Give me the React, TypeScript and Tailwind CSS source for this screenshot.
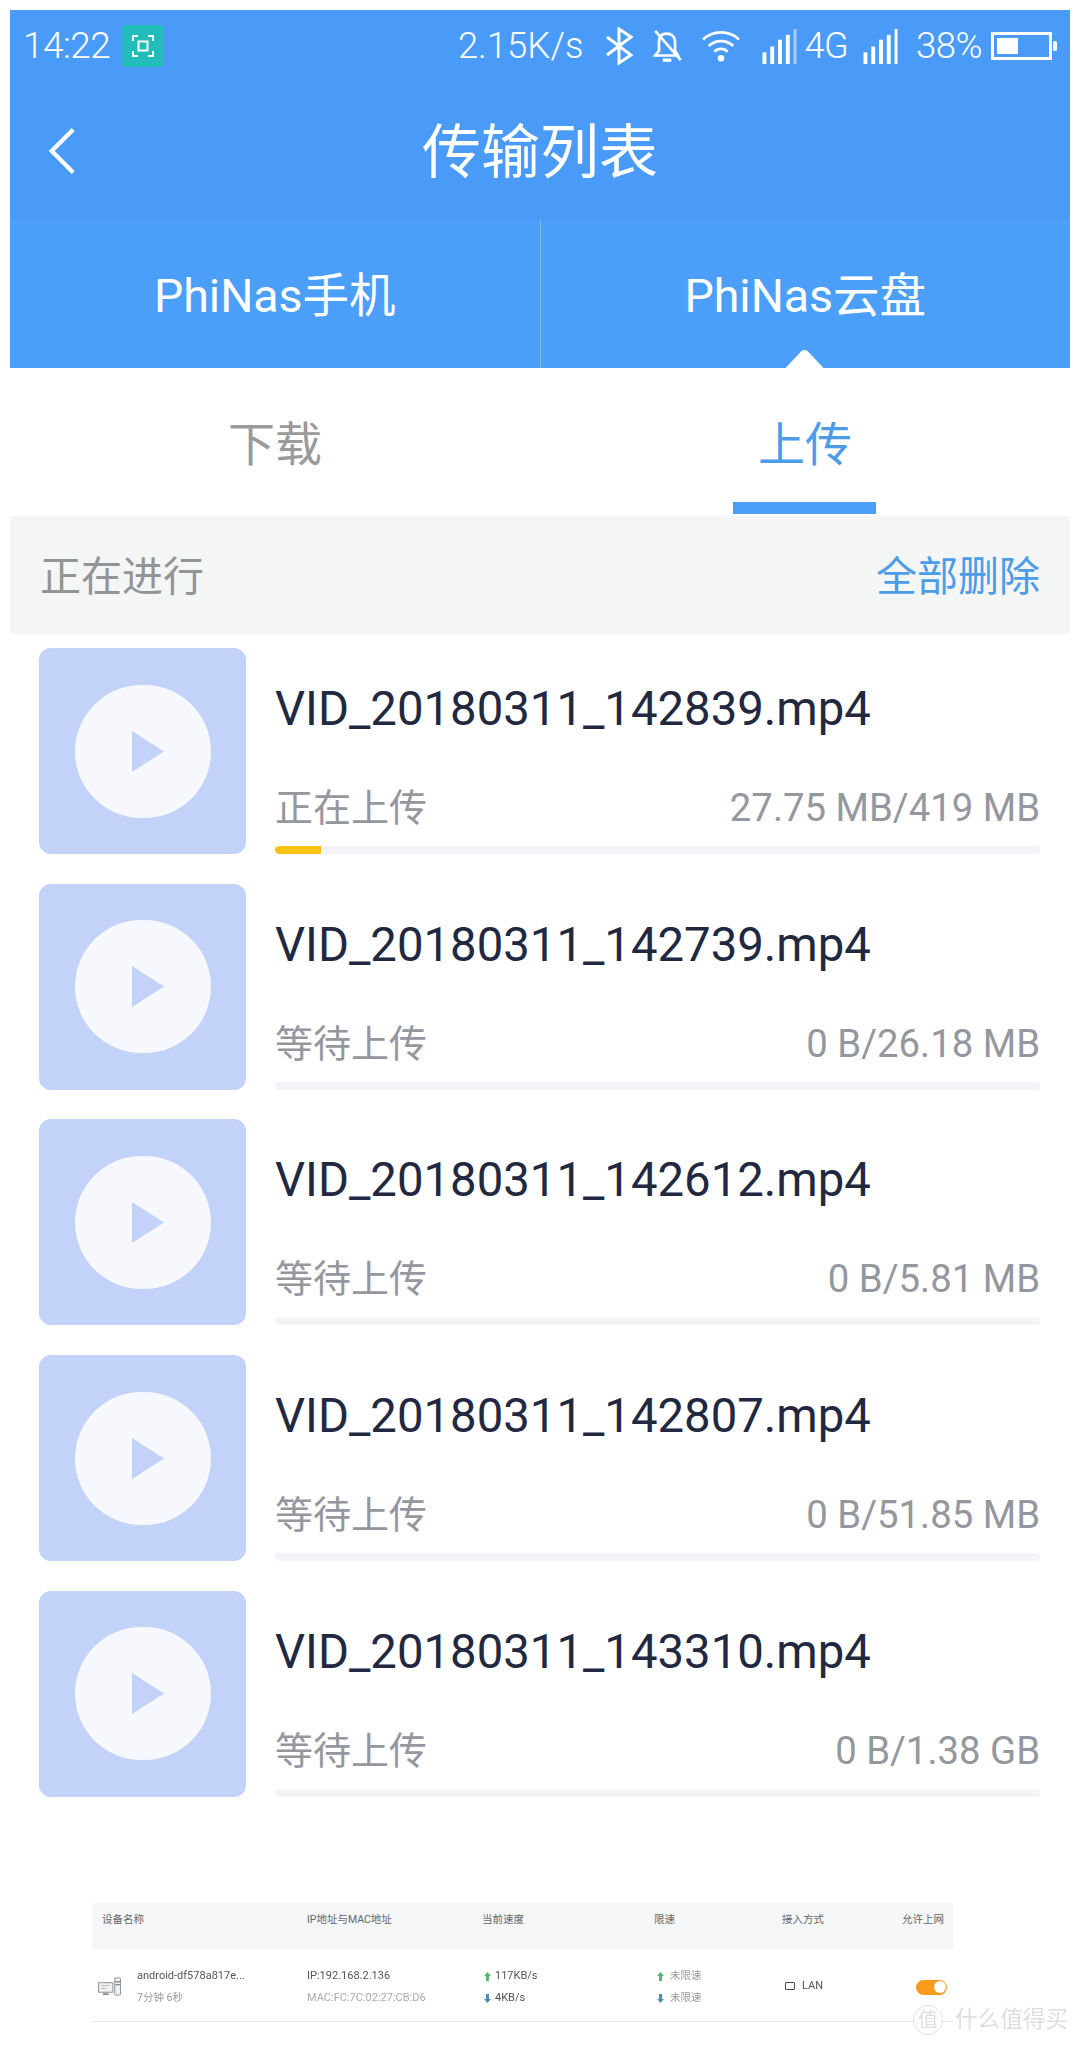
const cjk = "font-['Roboto','Noto_Sans_CJK_SC',sans-serif]";

const rows = [
  { name: "VID_20180311_142839.mp4", status: "正在上传", size: "27.75 MB/419 MB", progress: 6 },
  { name: "VID_20180311_142739.mp4", status: "等待上传", size: "0 B/26.18 MB", progress: 0 },
  { name: "VID_20180311_142612.mp4", status: "等待上传", size: "0 B/5.81 MB", progress: 0 },
  { name: "VID_20180311_142807.mp4", status: "等待上传", size: "0 B/51.85 MB", progress: 0 },
  { name: "VID_20180311_143310.mp4", status: "等待上传", size: "0 B/1.38 GB", progress: 0 },
];

function Thumb() {
  return (
    <div className="w-[207px] h-[206px] shrink-0 rounded-[12px] bg-[#c2d2f9] flex items-center justify-center">
      <div className="w-[136px] h-[133px] rounded-full bg-[#f6f8fd] flex items-center justify-center">
        <svg width="33" height="41" viewBox="0 0 34 42" className="ml-[12px]">
          <path d="M0 0 L33 21 L0 42 Z" fill="#c2d2f9" />
        </svg>
      </div>
    </div>
  );
}

function Row({ r }: { r: (typeof rows)[number] }) {
  return (
    <div className="h-[235.7px] flex pl-[29px] pr-[30px]">
      <Thumb />
      <div className="flex-1 ml-[29px] flex flex-col h-[206px]">
        <div className="h-[60px] mt-[31px] text-[47.3px] leading-[60px] text-[#22283f] whitespace-nowrap">{r.name}</div>
        <div className="flex justify-between items-center h-[50px] mt-[44px]">
          <span className="text-[38px] leading-[50px] text-[#95979f]">{r.status}</span>
          <span className="text-[38.3px] leading-[50px] text-[#95979f]">{r.size}</span>
        </div>
        <div className="h-[9px] mt-[13px] rounded-full bg-[#f3f4f8] overflow-hidden">
          {r.progress > 0 && <div className="h-full w-[46px] rounded-l-full bg-[#f8c20e]" />}
        </div>
      </div>
    </div>
  );
}

function Signal({ dim }: { dim?: boolean }) {
  return (
    <svg width="38" height="35" viewBox="0 0 36 36" fill="#fff">
      <rect x="0" y="24" width="4" height="12" />
      <rect x="8" y="18" width="4" height="18" />
      <rect x="16" y="11" width="4" height="25" />
      <rect x="24" y="6" width="4" height="30" />
      <rect x="32" y="0" width="3" height="36" opacity={dim ? 0.5 : 1} />
    </svg>
  );
}

function StatusBar() {
  return (
    <div className="h-[88px] flex items-center pl-[13px] pr-[13px] pb-[16px] text-white">
      <span className="text-[37px] font-light tracking-[-0.5px]">14:22</span>
      <div className="ml-[12px] w-[41px] h-[42px] bg-[#22bdb8] rounded-[3px] flex items-center justify-center">
        <svg width="24" height="24" viewBox="0 0 24 24" fill="none" stroke="#fff" strokeWidth="2">
          <path d="M2 7V2h5M17 2h5v5M22 17v5h-5M7 22H2v-5" />
          <rect x="7.5" y="7.5" width="9" height="9" />
        </svg>
      </div>
      <span className="ml-auto text-[36.5px] font-light">2.15K/s</span>
      <svg className="ml-[22px]" width="28" height="38" viewBox="0 0 28 38" fill="none" stroke="#fff" strokeWidth="3">
        <path d="M2 10 L26 28 L14 36 V2 L26 10 L2 28" />
      </svg>
      <svg className="ml-[18px]" width="33" height="36" viewBox="0 0 32 38" fill="none" stroke="#fff" strokeWidth="2.8">
        <path d="M3 29h24l-3-5V15C24 9 20 6 15 6S7 9 7 15v9z" />
        <path d="M3 3 L30 34" />
        <path d="M11 34h9" strokeWidth="3.5" />
      </svg>
      <svg className="ml-[15px]" width="44" height="34" viewBox="0 0 42 36" fill="none" stroke="#fff" strokeWidth="3">
        <path d="M2 11C12 1 30 1 40 11" />
        <path d="M8 18C15 11 27 11 34 18" />
        <path d="M14 24C18 20 24 20 28 24" />
        <circle cx="21" cy="31" r="3.5" fill="#fff" stroke="none" />
      </svg>
      <div className="ml-[18px]"><Signal dim /></div>
      <span className="text-[36px] font-light ml-[5px] tracking-[-0.5px]">4G</span>
      <div className="ml-[14px]"><Signal /></div>
      <span className="text-[36.5px] font-light ml-[16px] tracking-[-0.5px]">38%</span>
      <svg className="ml-[9px]" width="66" height="28" viewBox="0 0 66 28" fill="none">
        <rect x="1.5" y="1.5" width="58" height="25" stroke="#fff" strokeWidth="3" />
        <rect x="6" y="6" width="21" height="16" fill="#fff" />
        <rect x="62" y="9" width="4" height="10" rx="1.5" fill="#fff" />
      </svg>
    </div>
  );
}

function AppTabs() {
  return (
    <div className="h-[148px] flex bg-[#4b9ff9] text-white relative">
      <div className="flex-1 flex items-center justify-center text-[46.5px] pt-[5px] border-r border-[#7cb9fb]">PhiNas手机</div>
      <div className="flex-1 flex items-center justify-center text-[46.5px] pt-[5px]">PhiNas云盘</div>
      <svg className="absolute bottom-0 left-[775px]" width="39" height="18" viewBox="0 0 38 18">
        <path d="M0 18 L16 1 Q19 -1 22 1 L38 18 Z" fill="#fff" />
      </svg>
    </div>
  );
}

function Arrow({ up }: { up: boolean }) {
  return (
    <svg width="7" height="9" viewBox="0 0 7 9" className="shrink-0">
      <path d={up ? "M3.5 0 L7 4 H5 V9 H2 V4 H0 Z" : "M3.5 9 L7 5 H5 V0 H2 V5 H0 Z"} fill={up ? "#55b678" : "#4a8db8"} />
    </svg>
  );
}

function DeviceTable() {
  return (
    <div className="ml-[82px] w-[861px] mt-[77px] text-[#555] text-[11px] blur-[0.3px]">
      <div className="h-[46px] bg-[#f4f6f8] flex pt-[11px] leading-[12px] text-[#666] text-[10.5px]">
        <div className="w-[215px] pl-[10px]">设备名称</div>
        <div className="w-[175px]">IP地址与MAC地址</div>
        <div className="w-[172px]">当前速度</div>
        <div className="w-[128px]">限速</div>
        <div className="w-[120px]">接入方式</div>
        <div>允许上网</div>
      </div>
      <div className="h-[73px] flex items-center border-b border-[#e8e8e8] pt-[4px]">
        <div className="w-[215px] flex items-center pl-[6px]">
          <svg width="24" height="20" viewBox="0 0 25 21" fill="none" stroke="#8a8f96" strokeWidth="1">
            <rect x="0.5" y="6" width="15" height="10" fill="#eef0f2" />
            <path d="M3 9h9M3 12h6" stroke="#b5b8bd" />
            <path d="M5 18h6" strokeWidth="2" />
            <rect x="17.5" y="1" width="6" height="18" rx="0.5" fill="#eef0f2" />
            <path d="M18 5h5M18 8h5" strokeWidth="1.5" />
          </svg>
          <div className="ml-[15px] leading-[22px]">
            <div className="text-[#555]">android-df578a817e...</div>
            <div className="text-[#999] text-[10.5px]">7分钟 6秒</div>
          </div>
        </div>
        <div className="w-[175px] leading-[22px]">
          <div>IP:192.168.2.136</div>
          <div className="text-[#aaa]">MAC:FC:7C:02:27:CB:D6</div>
        </div>
        <div className="w-[172px] leading-[22px] pl-[2px]">
          <div className="flex items-center gap-[4px]"><Arrow up />117KB/s</div>
          <div className="flex items-center gap-[4px]"><Arrow up={false} />4KB/s</div>
        </div>
        <div className="w-[128px] leading-[22px] text-[#999] pl-[3px] text-[10.5px]">
          <div className="flex items-center gap-[6px]"><Arrow up />未限速</div>
          <div className="flex items-center gap-[6px]"><Arrow up={false} />未限速</div>
        </div>
        <div className="w-[120px] flex items-center gap-[7px] pl-[3px] mb-[2px]">
          <div className="w-[10px] h-[8px] border border-[#444] rounded-[1px]" />LAN
        </div>
        <div className="w-[31px] h-[15px] rounded-full bg-[#f89a1e] flex items-center justify-end pr-[1px] ml-[14px]">
          <div className="w-[12px] h-[12px] rounded-full bg-white" />
        </div>
      </div>
    </div>
  );
}

export default function App() {
  return (
    <div className={`w-[1080px] h-[2045px] bg-white p-[10px] overflow-hidden relative ${cjk}`}>
      <div className="bg-[#4a9bf8]">
        <StatusBar />
        <div className="h-[122px] flex items-center relative text-white">
          <svg className="ml-[37px] mb-[16px]" width="30" height="50" viewBox="0 0 32 52" fill="none" stroke="#fff" strokeWidth="4.5">
            <path d="M28 3 L5 26 L28 49" />
          </svg>
          <div className="absolute inset-0 flex items-center justify-center text-[59px] pb-[12px]">传输列表</div>
        </div>
      </div>
      <AppTabs />
      <div className="h-[148px] flex">
        <div className="flex-1 flex items-center justify-center text-[47px] text-[#9a9a9a] pt-[7px]">下载</div>
        <div className="flex-1 flex items-center justify-center text-[47px] text-[#4c9ce8] pt-[7px] relative">
          上传
          <div className="absolute bottom-[2px] left-[193px] w-[143px] h-[12px] bg-[#4b9ff9]" />
        </div>
      </div>
      <div className="h-[118px] bg-[#f4f6f6] flex items-center justify-between px-[30px] text-[41px] pt-[6px]">
        <span className="text-[#929497]">正在进行</span>
        <span className="text-[#4c9ce8]">全部删除</span>
      </div>
      <div className="mt-[14px]">
        {rows.map((r) => (
          <Row key={r.name} r={r} />
        ))}
      </div>
      <DeviceTable />
      <div className="absolute right-[12px] bottom-[10px] flex items-center text-[#dedede]">
        <div className="w-[30px] h-[30px] rounded-full border border-[#e3e3e3] flex items-center justify-center text-[20px] bg-white">值</div>
        <span className="text-[22.6px] ml-[12px] leading-[30px]">什么值得买</span>
      </div>
    </div>
  );
}
